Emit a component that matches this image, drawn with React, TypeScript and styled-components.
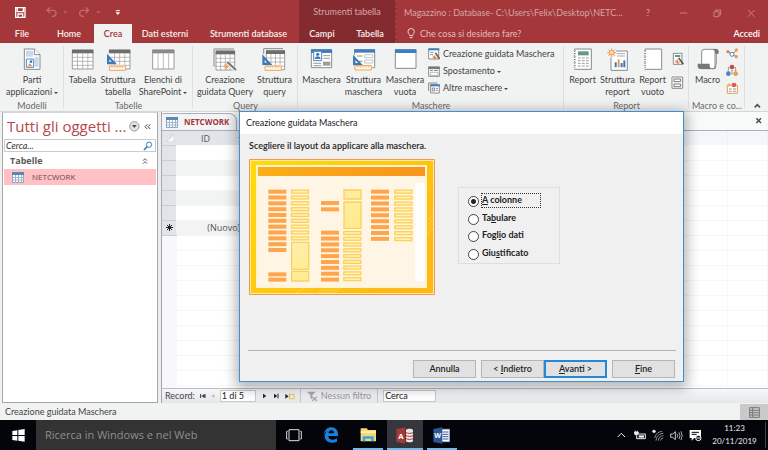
import React, { ReactNode } from 'react';
import styled, { createGlobalStyle, css } from 'styled-components';

const ui = '"Lato", "Open Sans", sans-serif';
const display = '"Open Sans", "Noto Sans", sans-serif';

const Global = createGlobalStyle`
  * { box-sizing: border-box; }
  body { margin: 0; font: 9px/12px ${ui}; color: #444; background: #f1f2f2; }
  button, input { font: inherit; color: inherit; margin: 0; padding: 0; border: 0; background: none; border-radius: 0; }
  button { cursor: pointer; }
  svg { display: block; flex: none; }
`;

/* Drawing whose view box is in thirds of a pixel */
function Glyph({ box, children }: { box: [number, number, number, number]; children: ReactNode }) {
  return (
    <svg width={Math.round(box[2] / 3)} height={Math.round(box[3] / 3)} viewBox={box.join(' ')} fill="none" aria-hidden="true">
      {children}
    </svg>
  );
}

const Page = styled.div`
  display: flex;
  flex-direction: column;
  height: 100vh;
  overflow: hidden;
`;

/* ---------- header ---------- */
const Header = styled.header`
  display: flex;
  flex: none;
  height: 43px;
  background: #a4373a;
  color: #fbeeee;
`;
const HeaderPart = styled.div<{ $grow?: boolean; $dark?: boolean }>`
  display: flex;
  flex-direction: column;
  flex: ${p => (p.$grow ? '1' : 'none')};
  min-width: 0;
  ${p => p.$dark && css`background: #842b2f; border-right: 1px dashed #9c4246;`}
`;
const TopLine = styled.div<{ $center?: boolean }>`
  display: flex;
  align-items: center;
  justify-content: ${p => (p.$center ? 'center' : 'flex-start')};
  height: 24px;
  color: #d6a5a7;
`;
const QuickBar = styled(TopLine)`
  gap: 11px;
  padding-left: 15px;
  & > :first-child { margin-right: 9px; }
`;
const TitleLine = styled(TopLine)`
  padding: 2px 12px 0 8px;
  justify-content: space-between;
`;
const WindowButtons = styled.div`
  display: flex;
  align-items: center;
  gap: 25px;
  & > :first-child { margin-right: 5px; }
`;
const IconButton = styled.button`
  display: flex;
  align-items: center;
  justify-content: center;
`;
const Tabs = styled.nav`
  display: flex;
  height: 19px;
`;
const Tab = styled.button<{ $w: number; $active?: boolean }>`
  width: ${p => p.$w}px;
  font-weight: 600;
  white-space: nowrap;
  ${p => p.$active && css`background: #f1f2f2; color: #a4373a;`}
`;
const TellMe = styled.div`
  display: flex;
  align-items: center;
  gap: 4px;
  height: 19px;
  padding: 0 8px 0 11px;
  color: #e3bcbd;
`;
const SignIn = styled.button`
  margin-left: auto;
  color: #fff;
  font-weight: 600;
`;

/* ---------- ribbon ---------- */
const Ribbon = styled.div`
  display: flex;
  flex: none;
  height: 69px;
  background: #f1f2f2;
  border-bottom: 1px solid #d4d5d6;
`;
const Group = styled.section<{ $w: number }>`
  display: flex;
  flex-direction: column;
  flex: none;
  width: ${p => p.$w}px;
  position: relative;
  &::after {
    content: '';
    position: absolute;
    right: 0;
    top: 3px;
    bottom: 3px;
    border-right: 1px solid #dddfe0;
  }
`;
const Tools = styled.div`
  display: flex;
  flex: 1;
  padding-left: 2px;
`;
const Caption = styled.div`
  height: 11px;
  text-align: center;
  color: #6a6a6a;
  white-space: nowrap;
`;
const BigTool = styled.button<{ $w: number }>`
  display: flex;
  flex-direction: column;
  align-items: center;
  gap: 3px;
  flex: none;
  width: ${p => p.$w}px;
  padding-top: 5px;
  white-space: nowrap;
  & > svg { height: 23px; }
`;
const SmallTools = styled.div`
  display: flex;
  flex-direction: column;
  gap: 5px;
  padding: 5px 0 0 2px;
`;
const SmallTool = styled.button`
  display: flex;
  align-items: center;
  gap: 3px;
  height: 12px;
  white-space: nowrap;
`;
const SideTools = styled(SmallTools)<{ $gap: number; $top: number }>`
  gap: ${p => p.$gap}px;
  padding: ${p => p.$top}px 0 0 2px;
`;
const Collapse = styled.button`
  align-self: flex-end;
  padding: 0 0 3px 9px;
`;
const Caret = styled.i`
  display: inline-block;
  margin-left: 2px;
  vertical-align: middle;
  border: 2px solid transparent;
  border-top-color: currentColor;
  border-bottom: 0;
`;

/* ---------- main area ---------- */
const Main = styled.main`
  display: flex;
  flex: 1;
  min-height: 0;
  position: relative;
  padding: 0 0 1px 2px;
`;
const NavPane = styled.aside`
  width: 156px;
  flex: none;
  background: #fff;
  border: 1px solid #a3a7ad;
  border-top-color: #d4d5d6;
  padding: 0 1px;
`;
const NavTitle = styled.div`
  display: flex;
  align-items: center;
  height: 26px;
  padding: 0 4px 0 3px;
  gap: 3px;
  color: #b5494c;
  font: 15px/24px ${display};
  white-space: nowrap;
  & > span { flex: 1; min-width: 0; }
`;
const NavSearch = styled.label`
  display: flex;
  align-items: center;
  height: 13px;
  border: 1px solid #c9ccd1;
  padding-right: 2px;
  input { flex: 1; min-width: 0; padding-left: 1px; color: #333; font-style: italic; outline: 0; }
  input::placeholder { color: #333; }
`;
const NavGroup = styled.button`
  display: flex;
  align-items: center;
  justify-content: space-between;
  width: 100%;
  height: 17px;
  padding: 0 8px 0 6px;
  font: 700 9px/16px ${display};
  color: #5a5a5a;
`;
const NavItem = styled.button`
  display: flex;
  align-items: center;
  gap: 8px;
  width: 100%;
  height: 16px;
  padding-left: 8px;
  background: #ffc1c3;
  color: #6b4a50;
  font: 8px/16px ${display};
`;
const Splitter = styled.div`
  flex: none;
  width: 3px;
  background: #eceef2;
`;
const Work = styled.section`
  display: flex;
  flex-direction: column;
  flex: 1;
  min-width: 0;
  border-left: 1px solid #a3a7ad;
`;
const DocTabs = styled.div`
  display: flex;
  align-items: flex-end;
  justify-content: space-between;
  flex: none;
  height: 19px;
  padding-right: 5px;
  background: #f8f9f9;
  border-bottom: 1px solid #abaeb3;
`;
const DocTab = styled.button`
  display: flex;
  align-items: center;
  gap: 6px;
  height: 17px;
  padding: 0 7px 0 4px;
  border: solid #abaeb3;
  border-width: 1px 1px 0 0;
  border-radius: 2px 8px 0 0;
  background: #f3f4f5;
  color: #a4373a;
  font: 700 8px/16px ${display};
`;
const CloseDoc = styled.button`
  height: 18px;
  display: flex;
  align-items: center;
`;
const Sheet = styled.div`
  flex: 1;
  min-height: 0;
  overflow: hidden;
  background: #fff;
`;
const Grid = styled.table`
  width: 100%;
  table-layout: fixed;
  border-collapse: collapse;
`;
const ColumnWidth = styled.col<{ $w?: number }>`
  width: ${p => (p.$w ? `${p.$w}px` : 'auto')};
`;
const Row = styled.tr<{ $shade?: boolean }>`
  height: 15px;
  td { padding: 0; border-bottom: 1px solid #f6f6f8; border-right: 1px solid #f8f8f9; }
  td:first-child { background: #f8f8fc; border-color: #f8f8fc; }
  ${p => p.$shade && css`td:nth-child(2) { background: #f2f3f3; }`}
`;
const RecordMark = styled.th`
  padding: 0;
  width: 15px;
  background: #e2e4ea;
  border-bottom: 1px solid #c9ccd6;
  svg { margin: 0 auto; }
`;
const HeadCell = styled.th<{ $named?: boolean }>`
  height: 14px;
  padding: 0;
  font: 9px/13px ${display};
  color: #555;
  background: ${p => (p.$named ? '#e2e4ea' : '#f5f6fd')};
  border-right: 1px solid #eeeff6;
`;
const HeadLabel = styled.span`
  display: flex;
  justify-content: space-between;
  align-items: center;
  padding: 0 4px 0 25px;
`;
const NewCell = styled.td`
  text-align: center;
  font: 9px/13px ${display};
  color: #555;
  && { padding-left: 26px; }
`;
const RecordBar = styled.div`
  display: flex;
  align-items: center;
  flex: none;
  height: 15px;
  padding-left: 3px;
  gap: 5px;
  background: linear-gradient(#f6f7f9, #e4e6eb);
  border-top: 1px solid #b9bcc2;
  white-space: nowrap;
`;
const Field = styled.input<{ $w: number }>`
  width: ${p => p.$w}px;
  height: 12px;
  padding-left: 1px;
  background: #fff;
  border: 1px solid #c6c9cf;
  color: #222;
`;
const Filter = styled.button`
  display: flex;
  align-items: center;
  align-self: stretch;
  gap: 3px;
  padding: 0 6px;
  border: solid #c6c9cf;
  border-width: 0 1px;
  color: #999;
`;

/* ---------- dialog ---------- */
const Dialog = styled.section`
  position: absolute;
  left: 239px;
  top: -1px;
  width: 445px;
  height: 271px;
  display: flex;
  flex-direction: column;
  border: 1px solid #3f8fd4;
  background: #f0f0f0;
  box-shadow: 0 3px 12px 3px rgba(0, 0, 0, 0.3);
  color: #222;
`;
const DialogTitle = styled.h1`
  flex: none;
  margin: 0;
  height: 22px;
  padding-left: 6px;
  background: #fff;
  font: 400 9px/22px ${ui};
`;
const DialogBody = styled.div`
  flex: 1;
  padding: 6px 0 0 1px;
  border-bottom: 1px solid #b4b4b4;
  margin: 0 7px 0 8px;
`;
const Prompt = styled.p`
  margin: 0 0 7px;
  font-weight: 600;
`;
const Choice = styled.div`
  display: flex;
  align-items: flex-start;
  gap: 23px;
`;
const RadioBox = styled.fieldset`
  margin: 28px 0 0;
  padding: 5px 9px 0;
  width: 102px;
  height: 77px;
  border: 1px solid #dedede;
  display: flex;
  flex-direction: column;
`;
const Option = styled.label<{ $focus?: boolean }>`
  display: flex;
  align-items: flex-start;
  gap: 2px;
  height: 18px;
  font-weight: 700;
  input {
    appearance: none;
    width: 11px;
    height: 11px;
    margin-top: 3px;
    border: 1px solid #444;
    border-radius: 50%;
    background: #fff;
  }
  input:checked { background: radial-gradient(#222 0 2px, #fff 3px); }
  span {
    height: 15px;
    line-height: 13px;
    padding: 0 1px;
    ${p => p.$focus && css`width: 60px; outline: 1px dotted #333; outline-offset: -1px;`}
  }
`;
const Actions = styled.div`
  display: flex;
  justify-content: flex-end;
  flex: none;
  height: 30px;
  padding: 9px 8px 0 0;
`;
const Action = styled.button<{ $main?: boolean; $gap?: number }>`
  width: 63px;
  height: 18px;
  margin-left: ${p => p.$gap ?? 0}px;
  background: #e1e1e1;
  border: 1px solid #b5b5b5;
  font-weight: 600;
  ${p => p.$main && css`border: 2px solid #2587d8;`}
`;

/* ---------- bars at the bottom ---------- */
const StatusBar = styled.footer`
  display: flex;
  align-items: stretch;
  justify-content: space-between;
  flex: none;
  height: 16px;
  padding-left: 5px;
  line-height: 16px;
  background: #f1f2f2;
`;
const ViewButton = styled(IconButton)`
  width: 28px;
  background: #c9c9c9;
`;
const Taskbar = styled.nav`
  display: flex;
  flex: none;
  height: 30px;
  background: #03050a;
  color: #e8e8e8;
`;
const Start = styled(IconButton)`
  width: 36px;
`;
const WinSearch = styled.input`
  width: 240px;
  padding-left: 9px;
  background: #333;
  font: 11px/30px ${display};
  &::placeholder { color: #8f8f8f; opacity: 1; }
`;
const Task = styled(IconButton)<{ $open?: boolean; $active?: boolean }>`
  width: 36px;
  margin-right: 1px;
  background:
    linear-gradient(${p => (p.$open ? '#76b9ed, #76b9ed' : 'transparent, transparent')}) bottom / ${p => (p.$active ? 36 : 30)}px 2px no-repeat
    ${p => (p.$active ? '#35373e' : 'transparent')};
`;
const Tray = styled.div`
  display: flex;
  align-items: center;
  gap: 6px;
  margin-left: auto;
  padding-right: 2px;
`;
const Clock = styled.time`
  width: 58px;
  padding-right: 4px;
  border-right: 1px solid #444;
  font: 8px/13px ${ui};
  text-align: center;
`;

/* ---------- drawings ---------- */
const Ruler = ({ x, y }: { x: number; y: number }) => (
  <g stroke="#eda35e" strokeWidth="3" fill="#fff6e8">
    <path d={`M${x} ${y}h49v13h-49z`} />
    <path d={`M${x + 8} ${y}v6m8 -6v6m8 -6v6m8 -6v6m8 -6v6`} strokeWidth="2" />
  </g>
);
const Square = ({ x, y }: { x: number; y: number }) => (
  <path fillRule="evenodd" fill="#3d7ab8" d={`M${x} ${y}l30 32h-30zM${x + 7} ${y + 17}v8h8z`} />
);
const TableDrawing = ({ x, y, w = 62, head = '#6d6d6d', rows = true }: { x: number; y: number; w?: number; head?: string; rows?: boolean }) => (
  <g>
    <path d={`M${x} ${y}h${w}v57h-${w}z`} fill="#fff" stroke="#8a8a8a" strokeWidth="2.5" />
    <path d={`M${x - 1} ${y - 1}h${w + 2}v11h-${w + 2}z`} fill={head} />
    <path d={`M${x + w / 4} ${y + 10}v47M${x + w / 2} ${y + 10}v47M${x + (w * 3) / 4} ${y + 10}v47`} stroke="#9c9c9c" strokeWidth="2" />
    {rows && <path d={`M${x} ${y + 22}h${w}M${x} ${y + 34}h${w}M${x} ${y + 46}h${w}`} stroke="#9c9c9c" strokeWidth="2" />}
  </g>
);
const PartsIcon = () => (
  <Glyph box={[66, 144, 54, 69]}>
    <path d="M70 147h30l17 17v44h-47z" fill="#fff" stroke="#8a8a8a" strokeWidth="3" />
    <path d="M100 147v17h17" fill="#fff" stroke="#8a8a8a" strokeWidth="3" />
    <path d="M75 152h21v18h-21zM101 170h12v30h-12z" fill="#c5d9ec" />
    <path d="M76 177h22v25h-22z" fill="#fff" stroke="#4e86bf" strokeWidth="3" />
    <path d="M79 199l7-9 9 9z" fill="#e8974b" /><circle cx="90" cy="185" r="4" fill="#3d7ab8" />
  </Glyph>
);
const TableIcon = () => <Glyph box={[213, 144, 69, 69]}><TableDrawing x={217} y={150} /></Glyph>;
const TableDesignIcon = () => (
  <Glyph box={[312, 144, 75, 69]}><TableDrawing x={322} y={150} /><path d="M312 160h12v34h46v20h-58z" fill="#f1f2f2" /><Square x={315} y={161} /><Ruler x={322} y={198} /></Glyph>
);
const ListIcon = () => <Glyph box={[450, 144, 72, 69]}><TableDrawing x={455} y={150} w={64} rows={false} head="#8a8a8a" /></Glyph>;
const QueryWizardIcon = () => (
  <Glyph box={[642, 144, 72, 69]}>
    <path d="M645 200v-53h60" stroke="#8a8a8a" strokeWidth="3" /><TableDrawing x={651} y={153} w={56} />
    <path d="M683 186l28 25" stroke="#f1f2f2" strokeWidth="12" /><path d="M685 186l26 24" stroke="#777" strokeWidth="6" />
    <path d="M682 190v18M673 199h18M676 193l12 12M688 193l-12 12" stroke="#eda35e" strokeWidth="3" />
  </Glyph>
);
const QueryDesignIcon = () => (
  <Glyph box={[18, 144, 75, 69]}>
    <path d="M23 180v-34h58" stroke="#8a8a8a" strokeWidth="3" /><TableDrawing x={31} y={152} w={55} />
    <path d="M18 162h12v32h46v20h-58z" fill="#f1f2f2" /><Square x={19} y={163} /><Ruler x={27} y={198} />
  </Glyph>
);
const FormIcon = () => (
  <Glyph box={[162, 144, 69, 69]}>
    <path d="M166 149h61v54h-61z" fill="#fff" stroke="#8a8a8a" strokeWidth="3" /><path d="M165 148h63v11h-63z" fill="#3f7fbf" />
    <path d="M173 154h24v28h-24z" fill="#fff" stroke="#4e86bf" strokeWidth="3" /><circle cx="185" cy="163" r="5" fill="#3d7ab8" /><path d="M176 177c0-11 18-11 18 0z" fill="#3d7ab8" />
    <path d="M202 167h20M202 175h20M172 190h24M172 197h24" stroke="#9c9c9c" strokeWidth="3" /><path d="M201 185h22v12h-22z" fill="#9c9c9c" />
  </Glyph>
);
const FormDesignIcon = () => (
  <Glyph box={[285, 144, 72, 69]}>
    <path d="M293 149h60v54h-60z" fill="#fff" stroke="#8a8a8a" strokeWidth="3" /><path d="M291 148h63v10h-63z" fill="#3f7fbf" />
    <path d="M300 168h16M300 184h16" stroke="#8a8a8a" strokeWidth="3" /><path d="M323 164h24v9h-24zM323 180h24v9h-24z" stroke="#aaa" strokeWidth="2" />
    <path d="M286 164h8v30h52v18h-60z" fill="#f1f2f2" /><Square x={288} y={164} /><Ruler x={294} y={197} />
  </Glyph>
);
const BlankFormIcon = () => (
  <Glyph box={[414, 144, 69, 69]}><path d="M418 149h62v56h-62z" fill="#fff" stroke="#8a8a8a" strokeWidth="3" /><path d="M417 148h64v11h-64z" fill="#3f7fbf" /></Glyph>
);
const FormWizardIcon = () => (
  <Glyph box={[519, 141, 36, 36]}>
    <path d="M521 144h30v30h-30z" fill="#fff" stroke="#777" strokeWidth="2.5" /><path d="M520 142h33v6h-33z" fill="#3f7fbf" />
    <path d="M526 154h10M526 161h8" stroke="#777" strokeWidth="2.5" /><path d="M541 155l13 19" stroke="#666" strokeWidth="5" /><path d="M539 163v12M533 169h12M534 164l9 10" stroke="#e8804b" strokeWidth="3" />
  </Glyph>
);
const NavigationIcon = () => (
  <Glyph box={[519, 195, 36, 33]}>
    <path d="M521 198h32v28h-32z" fill="#fff" stroke="#777" strokeWidth="2.5" /><path d="M520 197h34v7h-34z" fill="#777" />
    <path d="M525 208h9M537 208h12" stroke="#4e86bf" strokeWidth="3" /><path d="M526 214h23v9h-23z" stroke="#999" strokeWidth="2" />
  </Glyph>
);
const MoreFormsIcon = () => (
  <Glyph box={[519, 246, 36, 36]}>
    <path d="M521 273v-24h26" stroke="#888" strokeWidth="3" /><path d="M527 254h26v25h-26z" fill="#fff" stroke="#777" strokeWidth="2.5" /><path d="M526 253h28v6h-28z" fill="#3f7fbf" />
    <path d="M532 264h7v9h-7zM543 265h6M543 271h6" stroke="#777" strokeWidth="2.5" />
  </Glyph>
);
const Notebook = ({ x }: { x: number }) => (
  <g><path d={`M${x} 147h50v61h-50z`} fill="#fff" stroke="#8a8a8a" strokeWidth="3" /><path d={`M${x} 150v56`} stroke="#f1f2f2" strokeWidth="6" strokeDasharray="3 3" /><path d={`M${x - 3} 152h7m-7 9h7m-7 9h7m-7 9h7m-7 9h7m-7 9h7`} stroke="#8a8a8a" strokeWidth="2" /></g>
);
const ReportIcon = () => (
  <Glyph box={[183, 144, 60, 69]}><Notebook x={188} /><path d="M198 154h32v12h-32z" fill="#5f9c84" /><path d="M198 174h8m4 0h8m4 0h8M198 182h8m4 0h8m4 0h8M198 190h8m4 0h8m4 0h8M198 198h8m4 0h8m4 0h8" stroke="#999" strokeWidth="3" /></Glyph>
);
const ReportDesignIcon = () => (
  <Glyph box={[279, 141, 66, 69]}>
    <path d="M291 150h49v58h-49z" fill="#fff" stroke="#8a8a8a" strokeWidth="3" /><path d="M309 158h24M309 165h24" stroke="#aaa" strokeWidth="3" />
    <circle cx="293" cy="155" r="15" fill="#f1f2f2" /><circle cx="293" cy="155" r="6" fill="#fff" stroke="#ed9a4e" strokeWidth="4" /><path d="M293 141v28M279 155h28M283 145l20 20M303 145l-20 20" stroke="#ed9a4e" strokeWidth="2.5" /><circle cx="293" cy="155" r="5" fill="#fde6cc" />
    <path d="M302 184h6v15h-6zM320 186h6v13h-6z" fill="#3d7ab8" /><path d="M311 175h6v24h-6z" fill="#ed9a4e" /><path d="M328 178h6v21h-6z" fill="#3d7ab8" />
  </Glyph>
);
const BlankReportIcon = () => <Glyph box={[390, 144, 60, 69]}><Notebook x={396} /></Glyph>;
const ReportWizardIcon = () => (
  <Glyph box={[474, 156, 39, 42]}><path d="M481 160h26v33h-26z" fill="#fff" stroke="#777" strokeWidth="2.5" /><path d="M486 165h16v6h-16z" fill="#5f9c84" /><path d="M497 174l14 19" stroke="#555" strokeWidth="5" /><path d="M493 178v15M486 186h14M488 180l10 11" stroke="#e8804b" strokeWidth="3" /></Glyph>
);
const LabelsIcon = () => (
  <Glyph box={[474, 228, 39, 39]}><path d="M477 231h32v34h-32z" fill="#fff" stroke="#888" strokeWidth="3" /><path d="M483 237h20v8h-20zM483 252h20v8h-20z" stroke="#777" strokeWidth="3" /></Glyph>
);
const MacroIcon = () => (
  <Glyph box={[555, 144, 66, 69]}>
    <path d="M569 190v-34q0-8 8-8h36v38l-3 20h-41z" fill="#fff" stroke="#8a8a8a" strokeWidth="3" /><path d="M603 147h10q7 0 7 8v6h-12v-7z" fill="#777" /><path d="M557 191h36v8q1 8 8 8h-35q-9 0-9-9z" fill="#777" /><path d="M609 160v38q0 9-8 9" stroke="#8a8a8a" strokeWidth="3" />
  </Glyph>
);
const ModuleIcon = () => (
  <Glyph box={[642, 144, 39, 33]}><path d="M648 156l12 8 13-13M660 164l13 6" stroke="#777" strokeWidth="3" /><circle cx="648" cy="155" r="5" fill="#e8804b" /><circle cx="660" cy="163" r="6" fill="#fff" stroke="#4e86bf" strokeWidth="3" /><circle cx="673" cy="150" r="5" fill="#ed9a4e" /><circle cx="673" cy="170" r="5" fill="#ed9a4e" /></Glyph>
);
const ClassIcon = () => (
  <Glyph box={[642, 192, 39, 39]}><path d="M649 218v-15h22v15M660 203v22" stroke="#777" strokeWidth="3" strokeDasharray="5 2" /><circle cx="660" cy="201" r="7" fill="#cf4a3e" /><circle cx="649" cy="221" r="7" fill="#4e86bf" /><circle cx="671" cy="221" r="7" fill="#ed9a4e" /></Glyph>
);
const VisualIcon = () => (
  <Glyph box={[642, 243, 39, 39]}><path d="M646 253h30v24h-30z" fill="#fff" stroke="#ed9a4e" strokeWidth="3" /><path d="M651 264h8m4 0h9M651 271h8m4 0h9" stroke="#999" strokeWidth="3" /><circle cx="666" cy="252" r="7" fill="#df5a4e" /><circle cx="651" cy="252" r="5" fill="#f1b469" /></Glyph>
);
const SheetIcon = () => (
  <svg width="12" height="11" viewBox="0 0 12 11" aria-hidden="true"><path d="M0.5 0.5h11v10h-11z" fill="#fff" stroke="#8aa3bd" /><path d="M0 0h12v3h-12z" fill="#5b87b4" /><path d="M0 5.500h12M0 8h12M3.500 3v8M6.500 3v8M9.500 3v8" stroke="#9fb6cd" /></svg>
);
const NewRecordIcon = () => (
  <svg width="9" height="9" viewBox="0 0 9 9" aria-hidden="true"><path d="M4.500 1v7M1 4.500h7M2 2l5 5M7 2l-5 5" stroke="#222" strokeWidth="1" /></svg>
);

/* Preview of the columnar layout: label bars and field boxes */
const range = (n: number, start: number, step: number) => Array.from({ length: n }, (_, i) => start + i * step);
function Preview() {
  const bars: [number, number[]][] = [
    [97, [...range(11, 257, 17.5), 505, 521]],
    [255, [291, 310, ...range(9, 380, 17.6)]],
    [405, range(9, 257, 17.7)],
  ];
  const fields: [number, number[]][] = [
    [165, range(9, 257, 17.5)],
    [322, range(9, 381, 17.3)],
    [475, range(9, 257, 17.8)],
  ];
  return (
    <svg width="186" height="136" viewBox="39 165 558 408" fill="none" role="img" aria-label="Anteprima del layout a colonne">
      <defs>
        <linearGradient id="frame" x1="0" y1="0" x2="1" y2="0.7"><stop offset="0" stopColor="#ffdc0a" /><stop offset="1" stopColor="#fdb813" /></linearGradient>
        <linearGradient id="band"><stop offset="0" stopColor="#fbae17" /><stop offset="1" stopColor="#f7941d" /></linearGradient>
        <linearGradient id="box" x1="0" y1="0" x2="1" y2="1"><stop offset="0" stopColor="#fff3c0" /><stop offset="1" stopColor="#ffe673" /></linearGradient>
      </defs>
      <path d="M40.500 166.500h555v405h-555z" fill="#ffe9a8" stroke="#f39a4a" strokeWidth="3" />
      <path d="M45 171h546v396h-546z" fill="url(#frame)" />
      <path d="M575 350l16-20M575 364l16-20M575 378l16-20M575 392l16-20M180 567l24-14M246 567l20-14M258 567l20-14M270 567l20-14M282 567l20-14M294 567l20-14" stroke="#ffe680" strokeWidth="3" opacity=".5" />
      <path d="M60 183h513v369h-513z" fill="#fff3cf" />
      <path d="M66 217h502v330h-502z" fill="#fff5e4" />
      <path d="M66 189h501v27h-501z" fill="url(#band)" />
      <path d="M538 237h28v294h-28z" fill="#fff" />
      {bars.map(([x, ys]) => ys.map(y => <rect key={`${x}-${y}`} x={x} y={y} width="54" height="12" fill="#ffa64d" />))}
      {fields.map(([x, ys]) => ys.map(y => <rect key={`${x}-${y}`} x={x + 1.5} y={y + 1.5} width="51" height="9" fill="#fff1b0" stroke="#fcd15b" strokeWidth="4" />))}
      <g fill="url(#box)" stroke="#fcd15b" strokeWidth="4">
        <path d="M167 415h51v81h-51zM167 502h51v29h-51zM324 258h51v27h-51zM324 294h51v79h-51z" />
      </g>
    </svg>
  );
}

const bottomRows = 11;
const blankColumns = 8;

export default function App() {
  const blanks = Array.from({ length: blankColumns }, (_, i) => <td key={i} />);
  return (
    <Page>
      <Global />
      <Header>
        <HeaderPart>
          <QuickBar>
            <IconButton aria-label="Salva"><Glyph box={[45, 17, 33, 33]}><path d="M47 19h28v29h-28zM52 19v12h18v-12M54 48v-10h14v10" stroke="#fff" strokeWidth="4" /></Glyph></IconButton>
            <IconButton aria-label="Annulla"><Glyph box={[141, 17, 66, 33]}><path d="M153 18l-9 9 9 9M145 27h17q9 0 9 9t-9 9h-4" stroke="#c0696c" strokeWidth="4" /><path d="M193 30h12l-6 6z" fill="#c0696c" /></Glyph></IconButton>
            <IconButton aria-label="Ripeti"><Glyph box={[240, 17, 66, 33]}><path d="M260 18l9 9-9 9M268 27h-17q-9 0-9 9t9 9h4" stroke="#c0696c" strokeWidth="4" /><path d="M292 30h12l-6 6z" fill="#c0696c" /></Glyph></IconButton>
            <IconButton aria-label="Personalizza"><Glyph box={[345, 24, 26, 21]}><path d="M356 29h12" stroke="#fff" strokeWidth="3" /><path d="M355 34h14l-7 8z" fill="#fff" /></Glyph></IconButton>
          </QuickBar>
          <Tabs>
            <Tab $w={44}>File</Tab>
            <Tab $w={50}>Home</Tab>
            <Tab $w={38} $active>Crea</Tab>
            <Tab $w={66}>Dati esterni</Tab>
            <Tab $w={101}>Strumenti database</Tab>
          </Tabs>
        </HeaderPart>
        <HeaderPart $dark>
          <TopLine $center>Strumenti tabella</TopLine>
          <Tabs>
            <Tab $w={46}>Campi</Tab>
            <Tab $w={50}>Tabella</Tab>
          </Tabs>
        </HeaderPart>
        <HeaderPart $grow>
          <TitleLine>
            <span>Magazzino : Database- C:\Users\Felix\Desktop\NETC...</span>
            <WindowButtons>
              <IconButton aria-label="Guida">?</IconButton>
              <IconButton aria-label="Riduci a icona"><Glyph box={[0, 0, 24, 24]}><path d="M0 12h22" stroke="#c98083" strokeWidth="3" /></Glyph></IconButton>
              <IconButton aria-label="Ripristina"><Glyph box={[0, 0, 27, 27]}><path d="M3 8h15v15h-15zM8 8v-5h15v15h-5" stroke="#c98083" strokeWidth="3" /></Glyph></IconButton>
              <IconButton aria-label="Chiudi"><Glyph box={[0, 0, 27, 27]}><path d="M3 3l20 20M23 3l-20 20" stroke="#c98083" strokeWidth="3" /></Glyph></IconButton>
            </WindowButtons>
          </TitleLine>
          <TellMe>
            <Glyph box={[451, 81, 27, 36]}><path d="M459 104c0-6-5-6-5-12a9 9 0 0 1 19 0c0 6-5 6-5 12zM459 110h9" stroke="#f0d5d6" strokeWidth="3" /></Glyph>
            <span>Che cosa si desidera fare?</span>
            <SignIn>Accedi</SignIn>
          </TellMe>
        </HeaderPart>
      </Header>

      <Ribbon>
        <Group $w={64}>
          <Tools><BigTool $w={60}><PartsIcon /><span>Parti<br />applicazioni<Caret /></span></BigTool></Tools>
          <Caption>Modelli</Caption>
        </Group>
        <Group $w={129}>
          <Tools>
            <BigTool $w={33}><TableIcon /><span>Tabella</span></BigTool>
            <BigTool $w={38}><TableDesignIcon /><span>Struttura<br />tabella</span></BigTool>
            <BigTool $w={52}><ListIcon /><span>Elenchi di<br />SharePoint<Caret /></span></BigTool>
          </Tools>
          <Caption>Tabelle</Caption>
        </Group>
        <Group $w={105}>
          <Tools>
            <BigTool $w={60}><QueryWizardIcon /><span>Creazione<br />guidata Query</span></BigTool>
            <BigTool $w={39}><QueryDesignIcon /><span>Struttura<br />query</span></BigTool>
          </Tools>
          <Caption>Query</Caption>
        </Group>
        <Group $w={266}>
          <Tools>
            <BigTool $w={43}><FormIcon /><span>Maschera</span></BigTool>
            <BigTool $w={41}><FormDesignIcon /><span>Struttura<br />maschera</span></BigTool>
            <BigTool $w={42}><BlankFormIcon /><span>Maschera<br />vuota</span></BigTool>
            <SmallTools>
              <SmallTool><FormWizardIcon />Creazione guidata Maschera</SmallTool>
              <SmallTool><NavigationIcon /><span>Spostamento<Caret /></span></SmallTool>
              <SmallTool><MoreFormsIcon /><span>Altre maschere<Caret /></span></SmallTool>
            </SmallTools>
          </Tools>
          <Caption>Maschere</Caption>
        </Group>
        <Group $w={125}>
          <Tools>
            <BigTool $w={33}><ReportIcon /><span>Report</span></BigTool>
            <BigTool $w={37}><ReportDesignIcon /><span>Struttura<br />report</span></BigTool>
            <BigTool $w={33}><BlankReportIcon /><span>Report<br />vuoto</span></BigTool>
            <SideTools $gap={10} $top={9}>
              <IconButton aria-label="Creazione guidata Report"><ReportWizardIcon /></IconButton>
              <IconButton aria-label="Etichette"><LabelsIcon /></IconButton>
            </SideTools>
          </Tools>
          <Caption>Report</Caption>
        </Group>
        <Group $w={56}>
          <Tools>
            <BigTool $w={33}><MacroIcon /><span>Macro</span></BigTool>
            <SideTools $gap={5} $top={5}>
              <IconButton aria-label="Modulo"><ModuleIcon /></IconButton>
              <IconButton aria-label="Modulo di classe"><ClassIcon /></IconButton>
              <IconButton aria-label="Visual Basic"><VisualIcon /></IconButton>
            </SideTools>
          </Tools>
          <Caption>Macro e co...</Caption>
        </Group>
        <Collapse aria-label="Comprimi barra"><Glyph box={[0, 0, 21, 15]}><path d="M2 13l8-8 8 8" stroke="#555" strokeWidth="5" /></Glyph></Collapse>
      </Ribbon>

      <Main>
        <NavPane>
          <NavTitle>
            <span>Tutti gli oggetti ...</span>
            <IconButton aria-label="Menu"><Glyph box={[0, 0, 33, 33]}><circle cx="16" cy="16" r="14" fill="#e4e4e4" stroke="#999" strokeWidth="3" /><path d="M9 12h14l-7 9z" fill="#444" /></Glyph></IconButton>
            <IconButton aria-label="Riduci riquadro"><Glyph box={[0, 0, 27, 27]}><path d="M13 7l-7 7 7 7M22 7l-7 7 7 7" stroke="#444" strokeWidth="3" /></Glyph></IconButton>
          </NavTitle>
          <NavSearch>
            <input aria-label="Cerca" placeholder="Cerca..." />
            <Glyph box={[0, 0, 30, 30]}><circle cx="18" cy="11" r="8" stroke="#3f7fbf" strokeWidth="3" /><path d="M12 17l-9 10" stroke="#3f7fbf" strokeWidth="5" /></Glyph>
          </NavSearch>
          <NavGroup>Tabelle<Glyph box={[0, 0, 18, 24]}><path d="M3 11l6-6 6 6M3 20l6-6 6 6" stroke="#555" strokeWidth="3" /></Glyph></NavGroup>
          <NavItem><SheetIcon />NETCWORK</NavItem>
        </NavPane>
        <Splitter />
        <Work>
          <DocTabs>
            <DocTab><SheetIcon />NETCWORK</DocTab>
            <CloseDoc aria-label="Chiudi oggetto"><Glyph box={[0, 0, 24, 24]}><path d="M4 4l14 14M18 4l-14 14" stroke="#444" strokeWidth="4" /></Glyph></CloseDoc>
          </DocTabs>
          <Sheet>
            <Grid>
              <colgroup>
                <ColumnWidth $w={14} />
                {range(7, 0, 1).map(i => <ColumnWidth key={i} $w={70} />)}
                <ColumnWidth $w={61} />
                <ColumnWidth />
              </colgroup>
              <thead>
                <tr>
                  <RecordMark><svg width="9" height="9" viewBox="0 0 9 9" aria-hidden="true"><path d="M9 1v8h-8z" fill="#f6f7fa" stroke="#cdd0d8" /></svg></RecordMark>
                  <HeadCell $named><HeadLabel>ID<Caret /></HeadLabel></HeadCell>
                  {Array.from({ length: blankColumns }, (_, i) => <HeadCell key={i} />)}
                </tr>
              </thead>
              <tbody>
                {range(5, 0, 1).map(i => <Row key={i} $shade={i % 2 === 1}><RecordMark /><td />{blanks}</Row>)}
                <Row $shade><RecordMark><NewRecordIcon /></RecordMark><NewCell>(Nuovo)</NewCell>{blanks}</Row>
                {range(bottomRows, 0, 1).map(i => <Row key={i}><td /><td />{blanks}</Row>)}
              </tbody>
            </Grid>
          </Sheet>
          <RecordBar>
            <span>Record:</span>
            <IconButton aria-label="Primo"><Glyph box={[0, 0, 18, 18]}><path d="M2 3v12M15 3v12M15 9h-3" stroke="#333" strokeWidth="3" /><path d="M13 3v12l-8-6z" fill="#333" /></Glyph></IconButton>
            <IconButton aria-label="Precedente"><Glyph box={[0, 0, 12, 18]}><path d="M10 3v12l-8-6z" fill="#b5b5b5" /></Glyph></IconButton>
            <Field $w={36} aria-label="Record corrente" defaultValue="1 di 5" />
            <IconButton aria-label="Successivo"><Glyph box={[0, 0, 21, 18]}><path d="M6 2v14l10-7z" fill="#222" /></Glyph></IconButton>
            <IconButton aria-label="Ultimo"><Glyph box={[0, 0, 21, 18]}><path d="M3 2v14l10-7z" fill="#222" /><path d="M15 2v14" stroke="#222" strokeWidth="3" /></Glyph></IconButton>
            <IconButton aria-label="Nuovo"><Glyph box={[0, 0, 30, 21]}><path d="M1 3v14l10-7z" fill="#222" /><path d="M14 4h13v13h-13z" stroke="#f2bd3c" strokeWidth="4" strokeDasharray="4 2" /></Glyph></IconButton>
            <Filter><Glyph box={[0, 0, 33, 33]}><path d="M0 2h26l-10 11v13l-6-5v-8z" fill="#aaa" /><path d="M16 17l14 13M30 17l-14 13" stroke="#aaa" strokeWidth="4" /></Glyph>Nessun filtro</Filter>
            <Field $w={53} aria-label="Cerca" defaultValue="Cerca" />
          </RecordBar>
        </Work>

        <Dialog role="dialog" aria-labelledby="wizard-title">
          <DialogTitle id="wizard-title">Creazione guidata Maschera</DialogTitle>
          <DialogBody>
            <Prompt>Scegliere il layout da applicare alla maschera.</Prompt>
            <Choice>
              <Preview />
              <RadioBox aria-label="Layout">
                <Option $focus><input type="radio" name="layout" defaultChecked /><span><u>A</u> colonne</span></Option>
                <Option><input type="radio" name="layout" /><span>Ta<u>b</u>ulare</span></Option>
                <Option><input type="radio" name="layout" /><span>Fogl<u>i</u>o dati</span></Option>
                <Option><input type="radio" name="layout" /><span>Giu<u>s</u>tificato</span></Option>
              </RadioBox>
            </Choice>
          </DialogBody>
          <Actions>
            <Action>Annulla</Action>
            <Action $gap={5}>&lt; <u>I</u>ndietro</Action>
            <Action $main><u>A</u>vanti &gt;</Action>
            <Action $gap={5}><u>F</u>ine</Action>
          </Actions>
        </Dialog>
      </Main>

      <StatusBar>
        <span>Creazione guidata Maschera</span>
        <ViewButton aria-label="Visualizzazione Foglio dati"><Glyph box={[0, 0, 33, 33]}><path d="M2 2h29v29h-29zM2 10h29M2 17h29M2 24h29M11 2v29" stroke="#777" strokeWidth="3" /></Glyph></ViewButton>
      </StatusBar>
      <Taskbar>
        <Start aria-label="Start"><Glyph box={[35, 146, 39, 39]}><path d="M36 152l15-2v14h-15zM54 149l19-3v18h-19zM36 167h15v14l-15-2zM54 167h19v17l-19-3z" fill="#fff" /></Glyph></Start>
        <WinSearch aria-label="Ricerca" placeholder="Ricerca in Windows e nel Web" />
        <Task aria-label="Visualizzazione attività"><Glyph box={[150, 264, 48, 42]}><path d="M159 269h30v33h-30zM155 274h-3v23h3M193 274h3v23h-3" stroke="#ddd" strokeWidth="3" /></Glyph></Task>
        <Task aria-label="Edge"><Glyph box={[264, 261, 48, 48]}><path d="M266 284c2-14 11-22 23-22 13 0 20 10 20 21v5h-29c0 8 6 11 13 11 5 0 9-1 13-4v10c-4 2-9 3-15 3-14 0-22-8-22-20 0-7 4-12 9-15-7 1-10 6-12 11zM281 280h16c0-6-3-9-8-9s-8 4-8 9z" fill="#1b7fe0" fillRule="evenodd" /></Glyph></Task>
        <Task $open aria-label="Esplora file"><Glyph box={[371, 261, 51, 48]}><path d="M373 265h18l4 5h24v34h-46z" fill="#f7d774" /><path d="M373 274h46v5h-46z" fill="#fff0b8" /><path d="M379 304v-15h33v15h-8v-8h-17v8z" fill="#35a8e0" /></Glyph></Task>
        <Task $open $active aria-label="Access"><Glyph box={[480, 260, 54, 51]}><path d="M481 266l27-5v49l-27-5z" fill="#a4373a" /><text x="487" y="295" fontFamily="Open Sans" fontWeight="700" fontSize="23" fill="#fff">A</text><path d="M510 270c0-6 21-6 21 0v31c0 6-21 6-21 0z" fill="#f3e3e3" /><path d="M510 277c6 3 15 3 21 0M510 286c6 3 15 3 21 0M510 295c6 3 15 3 21 0" stroke="#a4373a" strokeWidth="3" /></Glyph></Task>
        <Task $open aria-label="Word"><Glyph box={[591, 260, 54, 51]}><path d="M616 267h24v37h-24z" fill="#fff" stroke="#9db7dc" strokeWidth="3" /><path d="M620 275h17M620 282h17M620 289h17M620 296h17" stroke="#2b579a" strokeWidth="3" /><path d="M592 266l27-5v49l-27-5z" fill="#2b579a" /><text x="595" y="294" fontFamily="Open Sans" fontWeight="700" fontSize="21" fill="#fff">W</text></Glyph></Task>
        <Tray>
          <IconButton aria-label="Mostra icone nascoste"><Glyph box={[0, 0, 33, 24]}><path d="M2 18l11-11 11 11" stroke="#eee" strokeWidth="3" /></Glyph></IconButton>
          <Glyph box={[432, 268, 36, 33]}><path d="M445 280h21v14h-26v-10" stroke="#eee" strokeWidth="3" /><path d="M446 284h16v7h-16z" fill="#eee" /><path d="M433 274h12v4q0 5-6 5t-6-5zM436 270v5M442 270v5" stroke="#eee" strokeWidth="2.5" fill="#eee" /></Glyph>
          <Glyph box={[485, 265, 36, 39]}><circle cx="491" cy="272" r="5" fill="#eee" /><path d="M497 300a22 22 0 0 1 22-22M504 300a15 15 0 0 1 15-15M511 300a8 8 0 0 1 8-8M493 292a26 26 0 0 1 22-20" stroke="#aaa" strokeWidth="2.500" /></Glyph>
          <Glyph box={[538, 268, 39, 33]}><path d="M540 280h6l8-7v24l-8-7h-6z" stroke="#eee" strokeWidth="2.500" /><path d="M559 279q4 6 0 12M565 275q6 10 0 20M571 272q7 13 0 26" stroke="#ccc" strokeWidth="2.500" /></Glyph>
          <Glyph box={[593, 265, 39, 39]}><path d="M595 268h34v24h-20l-8 8v-8h-6z" fill="#fff" /><path d="M601 275h22M601 281h15" stroke="#03050a" strokeWidth="3" /><circle cx="621" cy="292" r="8" fill="#03050a" stroke="#fff" strokeWidth="3" /><path d="M616 292h10" stroke="#fff" strokeWidth="3" /></Glyph>
          <Clock>11:23<br />20/11/2019</Clock>
        </Tray>
      </Taskbar>
    </Page>
  );
}
